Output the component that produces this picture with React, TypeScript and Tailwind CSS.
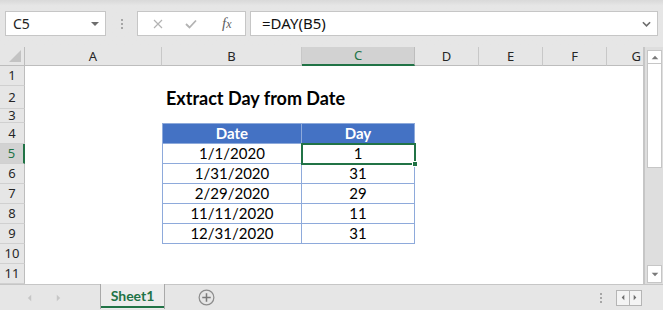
import React from 'react';

const ui = { fontFamily: '"Noto Sans", "Open Sans", sans-serif' };
const cell = { fontFamily: 'Lato, "Liberation Sans", sans-serif' };

const cols = [
  { l: 'A', w: 'w-[137px]' },
  { l: 'B', w: 'w-[140px]' },
  { l: 'C', w: 'w-[113px]' },
  { l: 'D', w: 'w-[64px]' },
  { l: 'E', w: 'w-[64px]' },
  { l: 'F', w: 'w-[64px]' },
  { l: 'G', w: 'flex-1' },
];

type Row = { n: number; h: string; b?: string; c?: string; head?: boolean; title?: boolean };

const rows: Row[] = [
  { n: 1, h: 'h-[20px]' },
  { n: 2, h: 'h-[23px]', title: true },
  { n: 3, h: 'h-[14px]' },
  { n: 4, h: 'h-[21px]', b: 'Date', c: 'Day', head: true },
  { n: 5, h: 'h-[20px]', b: '1/1/2020', c: '1' },
  { n: 6, h: 'h-[20px]', b: '1/31/2020', c: '31' },
  { n: 7, h: 'h-[20px]', b: '2/29/2020', c: '29' },
  { n: 8, h: 'h-[20px]', b: '11/11/2020', c: '11' },
  { n: 9, h: 'h-[20px]', b: '12/31/2020', c: '31' },
  { n: 10, h: 'h-[20px]' },
  { n: 11, h: 'h-[20px]' },
];

const Triangle = ({ dir, className }: { dir: 'l' | 'r' | 'u' | 'd'; className?: string }) => {
  const pts = { l: '5,0 5,8 1,4', r: '1,0 1,8 5,4', u: '0,5 8,5 4,1', d: '0,1 8,1 4,5' }[dir];
  const vb = dir === 'l' || dir === 'r' ? '0 0 6 8' : '0 0 8 6';
  return (
    <svg viewBox={vb} className={className}>
      <polygon points={pts} fill="currentColor" />
    </svg>
  );
};

const Dots = () => (
  <div className="flex flex-col gap-[2px]">
    <span className="w-[2px] h-[2px] bg-[#a6a6a6]" />
    <span className="w-[2px] h-[2px] bg-[#a6a6a6]" />
    <span className="w-[2px] h-[2px] bg-[#a6a6a6]" />
  </div>
);

const FormulaBar = () => (
  <div className="h-[47px] flex items-start pt-[11px] pl-[5px] pr-[5px] bg-gradient-to-b from-[#d9d9d9] via-[#e6e6e6] to-[#e6e6e6] from-[0%] via-[12%]">
    {/* name box */}
    <div className="w-[101px] h-[25px] bg-white border border-[#c6c6c6] flex items-center justify-between pl-[7px] pr-[6px]">
      <span className="text-[14px] text-[#222] leading-none" style={ui}>C5</span>
      <Triangle dir="d" className="w-[8px] h-[6px] text-[#6d6d6d]" />
    </div>
    <div className="w-[31px] h-[25px] flex items-center justify-center">
      <Dots />
    </div>
    {/* cancel / enter / fx */}
    <div className="w-[109px] h-[25px] bg-white border border-[#c6c6c6] flex items-center">
      <svg viewBox="0 0 10 10" className="w-[10px] h-[10px] ml-[15px]">
        <path d="M1 1 L9 9 M9 1 L1 9" stroke="#b3b3b3" strokeWidth="1.2" />
      </svg>
      <svg viewBox="0 0 12 10" className="w-[12px] h-[10px] ml-[22px]">
        <path d="M1 5 L4.5 8.5 L11 1.5" stroke="#b3b3b3" strokeWidth="1.8" fill="none" />
      </svg>
      <span className="ml-[25px] text-[15px] italic text-[#5f5f5f] leading-none" style={{ fontFamily: '"Liberation Serif", serif' }}>
        f<span className="text-[12px]">x</span>
      </span>
    </div>
    <div className="ml-[4px] flex-1 h-[25px] bg-white border border-[#c6c6c6] flex items-center justify-between pl-[11px] pr-[6px]">
      <span className="text-[15px] text-[#111] leading-none" style={ui}>=DAY(B5)</span>
      <svg viewBox="0 0 10 6" className="w-[9px] h-[6px]">
        <path d="M1 1 L5 5 L9 1" stroke="#6d6d6d" strokeWidth="1.8" fill="none" />
      </svg>
    </div>
  </div>
);

const ColumnHeaders = () => (
  <div className="h-[19px] flex">
    <div className="w-[25px] h-full border-r border-b border-[#bdbdbd] flex items-end justify-end p-[3px]">
      <svg viewBox="0 0 12 12" className="w-[12px] h-[12px]">
        <polygon points="12,0 12,12 0,12" fill="#c3c3c3" />
      </svg>
    </div>
    {cols.map((c) => {
      const sel = c.l === 'C';
      return (
        <div
          key={c.l}
          className={`${c.w} h-full flex items-center justify-center text-[13px] leading-none ${
            sel
              ? 'bg-[#d2d2d2] text-[#217346] border-b-2 border-b-[#217346] border-r border-r-[#bdbdbd]'
              : 'text-[#262626] border-b border-b-[#bdbdbd] border-r border-r-[#c8c8c8]'
          } ${c.l === 'G' ? 'justify-end pr-[2px] border-r-0' : ''}`}
          style={ui}
        >
          {c.l}
        </div>
      );
    })}
  </div>
);

const GridRow = ({ r }: { r: Row }) => {
  const sel = r.n === 5;
  const tableRow = !!r.b;
  const cellBorder = 'border-r border-b border-[#8eaadb]';
  return (
    <div className={`${r.h} flex`}>
      <div
        className={`w-[25px] h-full flex items-center justify-center text-[13px] leading-none border-b border-[#d0d0d0] ${
          sel ? 'bg-[#d2d2d2] text-[#217346] border-r-2 border-r-[#217346]' : 'bg-[#e6e6e6] text-[#262626] border-r border-r-[#bdbdbd]'
        }`}
        style={ui}
      >
        {r.n}
      </div>
      <div className="w-[137px] h-full bg-white" />
      {r.title ? (
        <div className="w-[140px] h-full bg-white relative">
          <span className="absolute left-[4px] bottom-[2px] whitespace-nowrap text-[18px] font-bold text-black leading-none" style={cell}>
            Extract Day from Date
          </span>
        </div>
      ) : tableRow ? (
        <>
          <div
            className={`w-[140px] h-full flex items-center justify-center text-[15px] leading-none border-l ${cellBorder} ${
              r.head ? 'bg-[#4472c4] text-white font-bold border-t' : 'bg-white text-black'
            }`}
            style={cell}
          >
            {r.b}
          </div>
          <div
            className={`w-[113px] h-full flex items-center justify-center text-[15px] leading-none ${cellBorder} ${
              r.head ? 'bg-[#4472c4] text-white font-bold border-t' : 'bg-white text-black'
            }`}
            style={cell}
          >
            {r.c}
          </div>
        </>
      ) : (
        <>
          <div className="w-[140px] h-full bg-white" />
          <div className="w-[113px] h-full bg-white" />
        </>
      )}
      <div className="flex-1 h-full bg-white" />
    </div>
  );
};

const VScroll = () => (
  <div className="w-[18px] flex flex-col bg-[#dedede] pl-[2px] pr-[1px]">
    <div className="h-[3px]" />
    <div className="h-[14px] bg-white border border-[#c6c6c6] flex items-center justify-center">
      <Triangle dir="u" className="w-[8px] h-[5px] text-[#7a7a7a]" />
    </div>
    <div className="h-[104px] bg-white border border-[#c6c6c6] border-t-0" />
    <div className="flex-1" />
    <div className="h-[18px] bg-white border border-[#c6c6c6] flex items-center justify-center">
      <Triangle dir="d" className="w-[8px] h-[5px] text-[#7a7a7a]" />
    </div>
    <div className="h-[1px]" />
  </div>
);

const SheetTabs = () => (
  <div className="h-[26px] flex items-start bg-[#e6e6e6] border-t border-[#c6c6c6]">
    <div className="w-[100px] h-full flex items-center">
      <Triangle dir="l" className="w-[5px] h-[8px] ml-[27px] text-[#c6c6c6]" />
      <Triangle dir="r" className="w-[5px] h-[8px] ml-[24px] text-[#c6c6c6]" />
    </div>
    <div className="w-[65px] h-[25px] -mt-px bg-[#ececec] border-l border-r border-[#a9a9a9] flex flex-col">
      <div className="flex-1 flex items-center justify-center pt-[2px] text-[14px] font-bold text-[#217346] leading-none" style={cell}>
        Sheet1
      </div>
      <div className="h-[2px] bg-[#217346] mb-[1px]" />
    </div>
    <div className="w-[82px] h-full flex items-center justify-center">
      <svg viewBox="0 0 18 18" className="w-[17px] h-[17px]">
        <circle cx="9" cy="9" r="7.8" stroke="#8c8c8c" strokeWidth="1.3" fill="none" />
        <path d="M9 4.5 V13.5 M4.5 9 H13.5" stroke="#7a7a7a" strokeWidth="1.6" />
      </svg>
    </div>
    <div className="flex-1" />
    <div className="h-full flex items-center mr-[21px]">
      <div className="mr-[14px]">
        <Dots />
      </div>
      <div className="w-[26px] h-[16px] flex border border-[#b5b5b5] bg-[#f4f4f4]">
        <div className="flex-1 flex items-center justify-center border-r border-[#b5b5b5]">
          <Triangle dir="l" className="w-[4px] h-[7px] text-[#6d6d6d]" />
        </div>
        <div className="flex-1 flex items-center justify-center">
          <Triangle dir="r" className="w-[4px] h-[7px] text-[#6d6d6d]" />
        </div>
      </div>
    </div>
  </div>
);

export default function App() {
  return (
    <div className="w-[663px] h-[310px] overflow-hidden bg-[#e6e6e6] flex flex-col">
      <FormulaBar />
      <div className="flex h-[237px]">
        <div className="w-[645px] flex flex-col bg-[#e6e6e6] relative border-r-2 border-[#c6c6c6]">
          <ColumnHeaders />
          {rows.map((r) => (
            <GridRow key={r.n} r={r} />
          ))}
          {/* active cell C5 */}
          <div className="absolute left-[301px] top-[96px] w-[115px] h-[22px] border-2 border-[#217346] pointer-events-none">
            <div className="absolute right-[-4px] bottom-[-4px] w-[6px] h-[6px] bg-[#217346] border border-white" />
          </div>
        </div>
        <VScroll />
      </div>
      <SheetTabs />
    </div>
  );
}
